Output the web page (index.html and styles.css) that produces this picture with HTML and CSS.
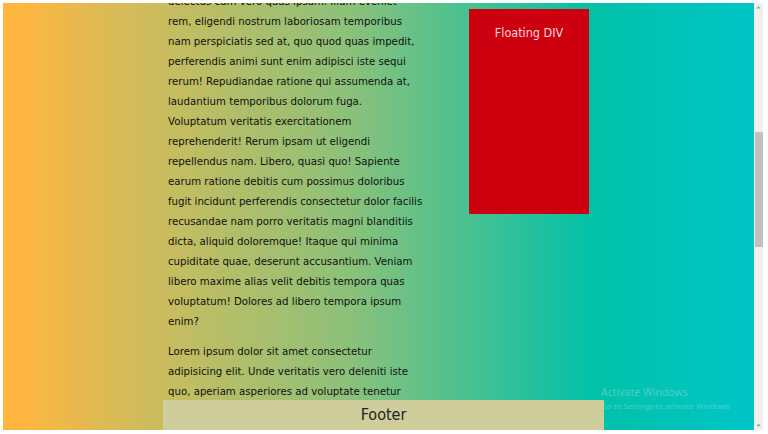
FILE: index.html
```html
<!DOCTYPE html>
<html lang="en">
<head>
<meta charset="utf-8">
<title>Floating DIV</title>
<link rel="stylesheet" href="styles.css">
</head>
<body>
<div class="frame">
  <div class="viewport">
    <div class="page">
      <div class="content">
        <article class="article">
          <p>delectus cum vero quas ipsam. Illum eveniet<br>rem, eligendi nostrum laboriosam temporibus nam perspiciatis sed at, quo quod quas impedit, perferendis animi sunt enim adipisci iste sequi rerum! Repudiandae ratione qui assumenda at, laudantium temporibus dolorum fuga. Voluptatum veritatis exercitationem reprehenderit! Rerum ipsam ut eligendi repellendus nam. Libero, quasi quo! Sapiente earum ratione debitis cum possimus doloribus fugit incidunt perferendis consectetur dolor facilis recusandae nam porro veritatis magni blanditiis dicta, aliquid doloremque! Itaque qui minima cupiditate quae, deserunt accusantium. Veniam libero maxime alias velit debitis tempora quas voluptatum! Dolores ad libero tempora ipsum enim?</p>
          <p>Lorem ipsum dolor sit amet consectetur adipisicing elit. Unde veritatis vero deleniti iste quo, aperiam asperiores ad voluptate tenetur dolorum fugiat, nesciunt quas rem eum.</p>
        </article>
        <aside class="floating">Floating DIV</aside>
      </div>
    </div>
    <div class="watermark">
      <div class="wm-title">Activate Windows</div>
      <div class="wm-sub">Go to Settings to activate Windows</div>
    </div>
    <footer class="footer">Footer</footer>
  </div>
  <div class="scrollbar">
    <svg class="arrow" width="9" height="8" viewBox="0 0 9 8"><path d="M2.5 5.5 L4.5 3 L6.5 5.5 Z" fill="#9a9a9a"/></svg>
    <div class="track"><div class="thumb"></div></div>
    <svg class="arrow" width="9" height="8" viewBox="0 0 9 8"><path d="M2.5 2.5 L4.5 5 L6.5 2.5 Z" fill="#9a9a9a"/></svg>
  </div>
</div>
</body>
</html>
```
FILE: styles.css
```css
html, body {
  margin: 0;
  padding: 0;
  background: #ffffff;
}

.frame {
  box-sizing: border-box;
  width: 768px;
  height: 434px;
  padding: 3px 5px 4px 3px;
  display: flex;
}

.viewport {
  flex: 1;
  position: relative;
  overflow: hidden;
  background: linear-gradient(to right, #ffb63f 2%, #d9bb57 15%, #8cc17a 46%, #00c1a9 79%, #00c5c7 100%);
  font-family: "DejaVu Sans Condensed", "DejaVu Sans", sans-serif;
  color: #1c1c1c;
}

.page {
  padding-left: 160px;
}

.content {
  width: 441px;
  display: flex;
  align-items: flex-start;
}

.article {
  flex: none;
  width: 255.4px;
  padding-left: 5px;
  margin-top: -21px;
  font-family: "DejaVu Sans", sans-serif;
  font-size: 10.2px;
  line-height: 20px;
  color: #111111;
}

.article p {
  margin: 10px 0;
}

.floating {
  flex: none;
  box-sizing: border-box;
  width: 120px;
  height: 205px;
  margin: 6px 15px 0 auto;
  padding-top: 16px;
  background: #cd0010;
  color: #f6d6d9;
  font-size: 12.5px;
  text-align: center;
}

.watermark {
  position: absolute;
  left: 598px;
  top: 382px;
  font-family: "Noto Sans", sans-serif;
  color: rgba(190, 230, 228, 0.42);
}

.wm-title {
  font-size: 10.5px;
  line-height: 15px;
}

.wm-sub {
  font-size: 7.9px;
  line-height: 12px;
}

.footer {
  position: absolute;
  left: 160px;
  bottom: 0;
  width: 441px;
  height: 30px;
  line-height: 30px;
  background: #cfcd9b;
  color: #232323;
  font-size: 16px;
  text-align: center;
}

.scrollbar {
  width: 9px;
  background: #f0f0f0;
  display: flex;
  flex-direction: column;
}

.arrow {
  display: block;
  flex: none;
}

.track {
  flex: 1;
  padding-top: 121px;
}

.thumb {
  width: 8px;
  margin-left: 1px;
  height: 115px;
  background: #c1c1c1;
}
```
